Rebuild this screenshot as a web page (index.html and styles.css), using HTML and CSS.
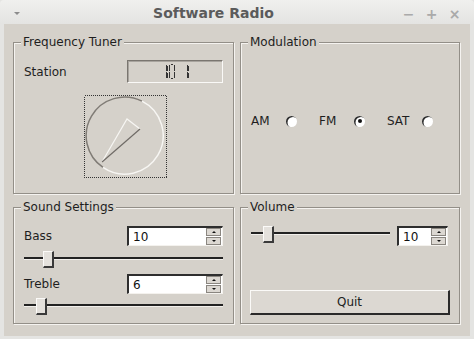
FILE: index.html
```html
<!DOCTYPE html>
<html lang="en">

<head>
    <meta charset="UTF-8">
    <meta name="viewport" content="width=device-width, initial-scale=1.0">
    <title>Software Radio</title>

    <link rel="stylesheet" href="styles.css">
</head>

<body>
    <div class="window">
        <!-- window decoration: menu arrow, title, and the min / max / close buttons -->
        <div class="titlebar">
            <div class="title-menu"><span class="menu-arrow"></span></div>
            <div class="title-text">Software Radio</div>
            <div class="title-buttons">
                <span class="title-button">&minus;</span>
                <span class="title-button">+</span>
                <span class="title-button">&times;</span>
            </div>
        </div>

        <!-- the client area is a 2x2 grid of group boxes -->
        <div class="client">
            <fieldset class="group">
                <legend>Frequency Tuner</legend>
                <div class="group-body tuner-body">
                    <div class="field-row">
                        <span class="label">Station</span>
                        <div class="lcd">
                            <!-- seven segment digits "101", outline style -->
                            <svg width="94" height="20" viewBox="0 0 94 20" shape-rendering="crispEdges">
                                <g fill="none" stroke="#333" stroke-width="1">
                                    <path d="M38.5 4 V10 M38.5 11 V17 M39.5 4.5 V9.5 M39.5 11.5 V16.5" />
                                    <path d="M41.5 4 V10 M41.5 11 V17 M46.5 4 V10 M46.5 11 V17 M43 3.5 H45 M43 17.5 H45" />
                                    <path d="M59.5 4 V10 M59.5 11 V17 M60.5 4.5 V9.5 M60.5 11.5 V16.5" />
                                </g>
                            </svg>
                        </div>
                    </div>
                    <div class="dial">
                        <svg width="83" height="83" viewBox="0 0 83 83">
                            <rect x="0.5" y="0.5" width="82" height="82" fill="none" stroke="#333" stroke-dasharray="1 1" shape-rendering="crispEdges" />
                            <path d="M58 6.2 A38.5 38.5 0 0 0 19 72.4" fill="none" stroke="#807c76" stroke-width="1.5" />
                            <path d="M19 72.4 A38.5 38.5 0 1 0 58 6.2" fill="none" stroke="#f7f6f3" stroke-width="1.5" />
                            <polyline points="18,67 43,24 56,34" fill="none" stroke="#f7f6f3" stroke-width="1.2" />
                            <line x1="56" y1="34" x2="18" y2="67" stroke="#6f6b66" stroke-width="1.2" />
                        </svg>
                    </div>
                </div>
            </fieldset>

            <fieldset class="group">
                <legend>Modulation</legend>
                <div class="group-body modulation-body">
                    <div class="radio-row">
                        <span class="label">AM</span>
                        <span class="radio-cell"><span class="radio"></span></span>
                        <span class="label">FM</span>
                        <span class="radio-cell"><span class="radio checked"></span></span>
                        <span class="label">SAT</span>
                        <span class="radio-cell"><span class="radio"></span></span>
                    </div>
                </div>
            </fieldset>

            <fieldset class="group">
                <legend>Sound Settings</legend>
                <div class="group-body sound-body">
                    <div class="field-row">
                        <span class="label">Bass</span>
                        <div class="spinbox">
                            <span class="spin-value">10</span>
                            <span class="spin-buttons"><span class="spin-up"></span><span class="spin-down"></span></span>
                        </div>
                    </div>
                    <div class="slider"><span class="slider-handle" style="margin-left: 19px"></span></div>

                    <div class="field-row treble-row">
                        <span class="label">Treble</span>
                        <div class="spinbox">
                            <span class="spin-value">6</span>
                            <span class="spin-buttons"><span class="spin-up"></span><span class="spin-down"></span></span>
                        </div>
                    </div>
                    <div class="slider treble-slider"><span class="slider-handle" style="margin-left: 12px"></span></div>
                </div>
            </fieldset>

            <fieldset class="group">
                <legend>Volume</legend>
                <div class="group-body volume-body">
                    <div class="volume-row">
                        <div class="slider volume-slider"><span class="slider-handle" style="margin-left: 12px"></span></div>
                        <div class="spinbox small-spinbox">
                            <span class="spin-value">10</span>
                            <span class="spin-buttons"><span class="spin-up"></span><span class="spin-down"></span></span>
                        </div>
                    </div>
                    <div class="quit-button">Quit</div>
                </div>
            </fieldset>
        </div>
    </div>
</body>

</html>
```

FILE: styles.css
```css
* {
    box-sizing: border-box;
}

body, html {
    margin: 0;
    height: 100%;
    background: #e4e4e2;
    font-family: "DejaVu Sans", sans-serif;
    font-size: 12px;
    color: #1e1e1e;
}

/* the whole window, decoration included */
.window {
    width: 474px;
    height: 339px;
    background: #e4e4e2;
    border-radius: 4px 4px 0 0;
    overflow: hidden;
}

/* title bar */
.titlebar {
    height: 24px;
    display: flex;
    align-items: center;
    background: linear-gradient(#f0f0ee, #e4e4e2);
}

.title-menu {
    width: 30px;
    padding-left: 14px;
    padding-top: 3px;
}

.menu-arrow {
    display: block;
    width: 0;
    height: 0;
    border-left: 3px solid transparent;
    border-right: 3px solid transparent;
    border-top: 3px solid #8c8c8c;
}

.title-text {
    flex: 1;
    text-align: center;
    font-size: 14px;
    font-weight: bold;
    color: #5b5b5b;
    padding-top: 2px;
}

.title-buttons {
    display: flex;
    padding-right: 8px;
    padding-top: 3px;
}

.title-button {
    width: 23px;
    text-align: center;
    font-size: 14px;
    font-weight: bold;
    color: #aaa;
}

/* client area holding the four group boxes */
.client {
    margin: 0 4px;
    height: 312px;
    background: #d5d1ca;
    padding: 11px 9px 0;
    display: grid;
    grid-template-columns: 221px 220px;
    column-gap: 6px;
    row-gap: 6px;
    align-content: start;
}

/* etched group box */
.group {
    margin: 0;
    padding: 0;
    min-width: 0;
    border: 1px solid #938f88;
    box-shadow: inset 1px 1px 0 #f5f3f0, 1px 1px 0 #f5f3f0;
}

.group legend {
    margin-left: 7px;
    padding: 0 2px;
    line-height: 14px;
    background: #d5d1ca;
}

.group-body {
    height: 144px;
    padding: 0 10px;
}

.label {
    line-height: 14px;
}

.field-row {
    display: flex;
    justify-content: space-between;
    align-items: center;
}

/* frequency tuner */
.tuner-body {
    padding-top: 11px;
}

.lcd {
    width: 96px;
    height: 23px;
    border: 1px solid;
    border-color: #7a7670 #faf9f7 #faf9f7 #7a7670;
    box-shadow: 1px 1px 0 #a8a49e inset;
}

.lcd svg {
    display: block;
}

.dial {
    margin-top: 12px;
    margin-left: 60px;
}

.dial svg {
    display: block;
}

/* modulation radios */
.modulation-body {
    display: flex;
    align-items: center;
}

.radio-row {
    display: grid;
    grid-template-columns: repeat(6, 34px);
    align-items: center;
}

.radio-cell {
    display: flex;
    align-items: center;
}

.radio {
    width: 11px;
    height: 11px;
    margin-left: 1px;
    border-radius: 50%;
    background: #fff;
    box-shadow: inset 1.5px 1px 0 #2b2b2b;
    display: flex;
    align-items: center;
    justify-content: center;
}

.radio.checked::after {
    content: "";
    width: 4px;
    height: 4px;
    border-radius: 50%;
    background: #111;
}

/* sound settings */
.sound-body {
    height: 109px;
    padding-top: 12px;
}

.treble-row {
    margin-top: 6px;
}

/* spin box with the up / down buttons */
.spinbox {
    width: 96px;
    height: 20px;
    background: #fff;
    border-top: 2px solid #2e2e2e;
    border-left: 2px solid #2e2e2e;
    border-right: 1px solid #f4f2ee;
    border-bottom: 1px solid #f4f2ee;
    display: flex;
    align-items: center;
}

.spin-value {
    flex: 1;
    padding-left: 4px;
    line-height: 14px;
    color: #111;
}

.spin-buttons {
    width: 15px;
    height: 17px;
    display: flex;
    flex-direction: column;
    gap: 1px;
    margin-right: 1px;
}

.spin-up, .spin-down {
    flex: 1;
    background: #dcd8d2;
    border: 1px solid #8a8680;
    display: flex;
    align-items: center;
    justify-content: center;
}

.spin-up::after, .spin-down::after {
    content: "";
    width: 0;
    height: 0;
    border-left: 2px solid transparent;
    border-right: 2px solid transparent;
}

.spin-up::after {
    border-bottom: 2px solid #111;
}

.spin-down::after {
    border-top: 2px solid #111;
}

/* slider: the groove is drawn as a background line */
.slider {
    height: 17px;
    margin-top: 5px;
    display: flex;
    background: linear-gradient(transparent 6px, #222 6px, #222 8px, #f2f0ec 8px, #f2f0ec 9px, transparent 9px);
}

.treble-slider {
    margin-top: 4px;
}

.slider-handle {
    width: 11px;
    height: 17px;
    background: #e4e1dc;
    border-top: 1px solid #fbfaf8;
    border-left: 1px solid #fbfaf8;
    border-right: 2px solid #3a3a3a;
    border-bottom: 2px solid #3a3a3a;
}

/* volume */
.volume-body {
    height: 109px;
    padding-top: 12px;
}

.volume-row {
    display: flex;
    gap: 7px;
    align-items: flex-start;
}

.volume-slider {
    width: 139px;
    margin-top: 0;
}

.small-spinbox {
    width: 51px;
}

.quit-button {
    width: 200px;
    height: 25px;
    margin-top: 44px;
    margin-left: -1px;
    background: #dcd8d2;
    border-top: 1px solid #fbfaf8;
    border-left: 1px solid #fbfaf8;
    border-right: 2px solid #2a2a2a;
    border-bottom: 2px solid #2a2a2a;
    display: flex;
    align-items: center;
    justify-content: center;
    color: #222;
}
```
